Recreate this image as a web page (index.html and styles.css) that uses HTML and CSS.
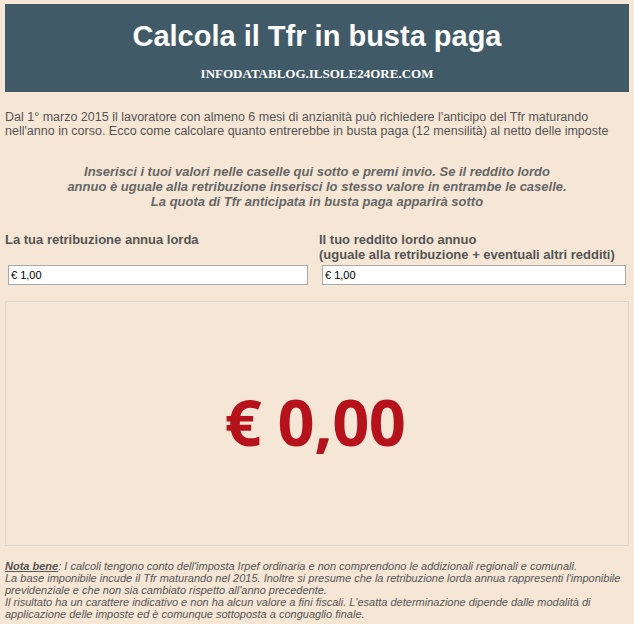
FILE: index.html
```html
<!DOCTYPE html>
<html lang="it">
<head>
<meta charset="utf-8">
<title>Calcola il Tfr in busta paga</title>
<link rel="stylesheet" href="styles.css">
</head>
<body>
<div class="page">
  <header class="hero">
    <h1 class="hero-title">Calcola il Tfr in busta paga</h1>
    <div class="hero-sub">INFODATABLOG.ILSOLE24ORE.COM</div>
  </header>
  <p class="intro">Dal 1° marzo 2015 il lavoratore con almeno 6 mesi di anzianità può richiedere l'anticipo del Tfr maturando nell'anno in corso. Ecco come calcolare quanto entrerebbe in busta paga (12 mensilità) al netto delle imposte</p>
  <p class="instr">Inserisci i tuoi valori nelle caselle qui sotto e premi invio. Se il reddito lordo<br>annuo è uguale alla retribuzione inserisci lo stesso valore in entrambe le caselle.<br>La quota di Tfr anticipata in busta paga apparirà sotto</p>
  <div class="fields">
    <div class="field">
      <label class="field-label">La tua retribuzione annua lorda</label>
      <input class="field-input" type="text" value="€ 1,00">
    </div>
    <div class="field">
      <label class="field-label">Il tuo reddito lordo annuo<br>(uguale alla retribuzione + eventuali altri redditi)</label>
      <input class="field-input" type="text" value="€ 1,00">
    </div>
  </div>
  <div class="result">€ 0,00</div>
  <p class="note"><span class="note-key">Nota bene</span>: I calcoli tengono conto dell'imposta Irpef ordinaria e non comprendono le addizionali regionali e comunali.<br>La base imponibile incude il Tfr maturando nel 2015. Inoltre si presume che la retribuzione lorda annua rappresenti l'imponibile previdenziale e che non sia cambiato rispetto all'anno precedente.<br>Il risultato ha un carattere indicativo e non ha alcun valore a fini fiscali. L'esatta determinazione dipende dalle modalità di applicazione delle imposte ed è comunque sottoposta a conguaglio finale.</p>
</div>
</body>
</html>
```
FILE: styles.css
```css
html, body {
  margin: 0;
  padding: 0;
  background: #f6e6d6;
}
body {
  font-family: "Liberation Sans", Arial, sans-serif;
  color: #555;
}
.page {
  width: 624px;
  padding: 4px 5px 0 5px;
}
.hero {
  background: #415a68;
  height: 88px;
  box-sizing: border-box;
  padding-top: 16px;
  text-align: center;
  color: #fff;
}
.hero-title {
  margin: 0;
  font-size: 29px;
  line-height: 32px;
  font-weight: bold;
}
.hero-sub {
  margin-top: 14px;
  font-family: "Liberation Serif", "Times New Roman", serif;
  font-weight: bold;
  font-size: 13px;
  line-height: 16px;
}
.intro {
  margin: 18px 0 0 0;
  font-size: 12.5px;
  line-height: 14px;
  color: #555;
}
.instr {
  margin: 26px 0 0 0;
  text-align: center;
  font-size: 13px;
  line-height: 15px;
  font-weight: bold;
  font-style: italic;
  color: #666;
}
.fields {
  display: grid;
  grid-template-columns: 314px 1fr;
  margin-top: 23px;
}
.field {
  display: flex;
  flex-direction: column;
}
.field-label {
  font-size: 13px;
  line-height: 15px;
  font-weight: bold;
  color: #555;
  height: 33px;
}
.field-input {
  box-sizing: border-box;
  margin: 0 0 0 3px;
  width: 300px;
  height: 20px;
  border: 1px solid #a9a9a9;
  background: #fff;
  font-family: "Liberation Sans", Arial, sans-serif;
  font-size: 11px;
  padding: 0 2px;
  color: #000;
}
.field:last-child .field-input {
  width: 304px;
}
.result {
  margin-top: 16px;
  height: 245px;
  box-sizing: border-box;
  padding: 0 4px 6px 0;
  border: 1px solid #dcd6d0;
  display: flex;
  align-items: center;
  justify-content: center;
  font-family: "Open Sans", sans-serif;
  font-weight: bold;
  font-size: 65px;
  letter-spacing: -0.5px;
  color: #b5121b;
}
.note {
  margin: 14px 0 0 0;
  font-size: 11px;
  line-height: 12px;
  font-style: italic;
  color: #555;
}
.note-key {
  font-weight: bold;
  text-decoration: underline;
}
```
